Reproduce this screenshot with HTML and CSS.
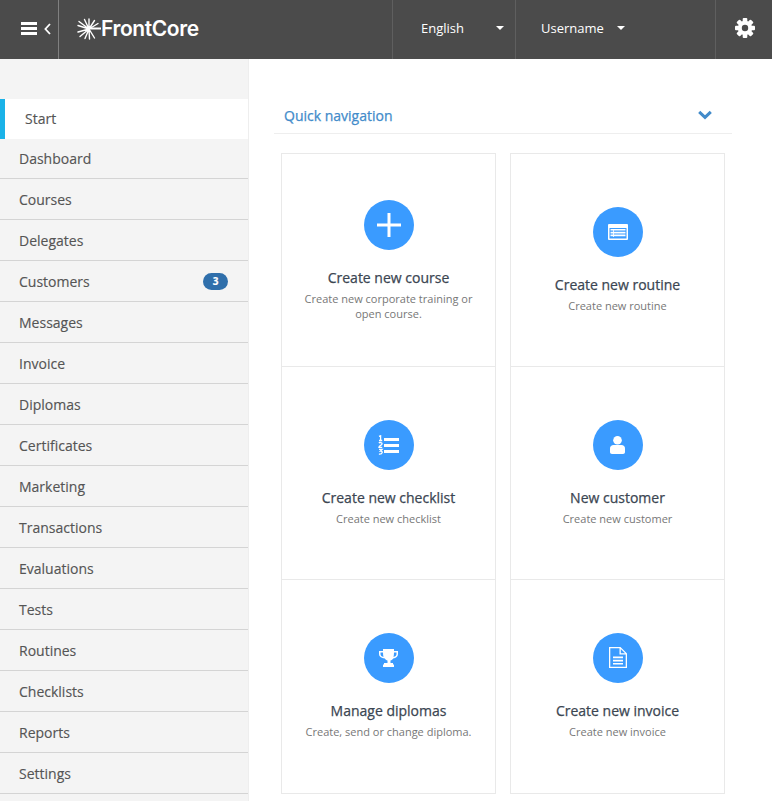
FILE: index.html
```html
<!DOCTYPE html>
<html lang="en">
<head>
    <meta charset="UTF-8">
    <meta name="viewport" content="width=device-width, initial-scale=1.0">
    <title>FrontCore - Start</title>
    <link rel="stylesheet" href="styles.css">
</head>
<body>
    <header class="topbar">
        <div class="toggle">
            <svg class="burger" width="16" height="13" viewBox="0 0 16 13"><path fill="#fff" d="M0 0h16v3H0zM0 5h16v3H0zM0 10h16v3H0z"/></svg>
            <svg class="back" width="7" height="12" viewBox="0 0 7 12"><path fill="none" stroke="#fff" stroke-width="1.800" d="M6 1 1.400 6 6 11"/></svg>
        </div>
        <a class="logo" href="#">
            <svg width="24" height="22" viewBox="0 0 24 22">
                <g fill="none" stroke="#fff" stroke-width="1.400" stroke-linecap="round">
                    <path d="M12 11 2 3.500M12 11 1 7.500M12 11 1 14M12 11 3 18.500M12 11 7.500 1.500M12 11 8 20.500M12 11 12.500 21M12 11 12 1M12 11 17.500 2.500M12 11 17.500 20M12 11 21 5.500"/>
                    <path d="M13 10.500h11" stroke-width="2"/>
                </g>
            </svg>
            <span>FrontCore</span>
        </a>
        <div class="menu menu-lang">
            <span>English</span>
            <i class="caret"></i>
        </div>
        <div class="menu menu-user">
            <span>Username</span>
            <i class="caret"></i>
        </div>
        <div class="settings">
            <svg width="20" height="20" viewBox="0 0 20 20">
                <g fill="#fff">
                    <rect x="7.700" y="0" width="4.600" height="20" rx="1"/>
                    <rect x="7.700" y="0" width="4.600" height="20" rx="1" transform="rotate(45 10 10)"/>
                    <rect x="7.700" y="0" width="4.600" height="20" rx="1" transform="rotate(90 10 10)"/>
                    <rect x="7.700" y="0" width="4.600" height="20" rx="1" transform="rotate(135 10 10)"/>
                </g>
                <circle cx="10" cy="10" r="5.200" fill="#4b4b4b" stroke="#fff" stroke-width="4"/>
            </svg>
        </div>
    </header>

    <div class="layout">
        <nav class="sidebar">
            <a class="nav-start" href="#">Start</a>
            <a class="nav-item" href="#">Dashboard</a>
            <a class="nav-item" href="#">Courses</a>
            <a class="nav-item" href="#">Delegates</a>
            <a class="nav-item" href="#">Customers <span class="badge">3</span></a>
            <a class="nav-item" href="#">Messages</a>
            <a class="nav-item" href="#">Invoice</a>
            <a class="nav-item" href="#">Diplomas</a>
            <a class="nav-item" href="#">Certificates</a>
            <a class="nav-item" href="#">Marketing</a>
            <a class="nav-item" href="#">Transactions</a>
            <a class="nav-item" href="#">Evaluations</a>
            <a class="nav-item" href="#">Tests</a>
            <a class="nav-item" href="#">Routines</a>
            <a class="nav-item" href="#">Checklists</a>
            <a class="nav-item" href="#">Reports</a>
            <a class="nav-item" href="#">Settings</a>
        </nav>

        <main class="content">
            <div class="quick-head">
                <h2>Quick navigation</h2>
                <svg width="14" height="10" viewBox="0 0 14 10"><path fill="none" stroke="#428bca" stroke-width="3" d="M1.200 1.800 7 7.400l5.800-5.600"/></svg>
            </div>

            <div class="cards">
                <a class="card" href="#">
                    <span class="circle">
                        <svg width="24" height="24" viewBox="0 0 24 24"><path fill="#fff" d="M10.500 0h3v10.500H24v3H13.500V24h-3V13.500H0v-3h10.500z"/></svg>
                    </span>
                    <h3>Create new course</h3>
                    <p>Create new corporate training or open course.</p>
                </a>
                <a class="card" href="#">
                    <span class="circle">
                        <svg width="20" height="16" viewBox="0 0 20 16"><path fill="#fff" fill-rule="evenodd" d="M1 0h18a1 1 0 0 1 1 1v14a1 1 0 0 1-1 1H1a1 1 0 0 1-1-1V1a1 1 0 0 1 1-1zm.5 4v10.500h17V4z"/><path fill="#fff" d="M2.500 5h15v1.600h-15zM2.500 7.800h15v1.600h-15zM2.500 10.600h15v1.600h-15zM5 5h.8v8H5z"/></svg>
                    </span>
                    <h3>Create new routine</h3>
                    <p>Create new routine</p>
                </a>
                <a class="card" href="#">
                    <span class="circle">
                        <svg width="21" height="20" viewBox="0 0 21 20">
                            <path fill="#fff" d="M6 3h15v3H6zM6 9h15v3H6zM6 15h15v3H6z"/>
                            <path fill="none" stroke="#fff" stroke-width="1.300" d="M1 1.400 2.600.8V5.500M1 5.500h3.200M.9 8.200c.6-1 3.200-1 3.200.6 0 1.300-3.200 2-3.200 3.600h3.300M1 14.300h3.100L2.400 16.200c2.600-.3 2.600 3.300-1.500 2.900"/>
                        </svg>
                    </span>
                    <h3>Create new checklist</h3>
                    <p>Create new checklist</p>
                </a>
                <a class="card" href="#">
                    <span class="circle">
                        <svg width="15" height="18" viewBox="0 0 15 18"><circle cx="7.500" cy="4.300" r="4.300" fill="#fff"/><path fill="#fff" d="M0 16v-3.500C0 10.500 1.500 9 3.500 9h8c2 0 3.500 1.500 3.500 3.500V16c0 1.200-.8 2-2 2H2c-1.200 0-2-.8-2-2z"/></svg>
                    </span>
                    <h3>New customer</h3>
                    <p>Create new customer</p>
                </a>
                <a class="card" href="#">
                    <span class="circle">
                        <svg width="19" height="18" viewBox="0 0 19 18"><path fill="#fff" d="M4 0h11v2h4v3c0 2.400-2 4.200-4.800 4.500-.7 1-1.500 1.600-2.700 2V14h2.500v1.600H15V18H4v-2.400h1V14h3.500v-2.500c-1.200-.4-2-1-2.700-2C2 9.200 0 7.400 0 5V2h4zM1.500 3.400V5c0 1.500 1.200 2.700 3 3C4.200 6.600 4 5 4 3.400zm16 0H15c0 1.600-.2 3.200-.5 4.600 1.800-.3 3-1.500 3-3z"/></svg>
                    </span>
                    <h3>Manage diplomas</h3>
                    <p>Create, send or change diploma.</p>
                </a>
                <a class="card" href="#">
                    <span class="circle">
                        <svg width="18" height="21" viewBox="0 0 18 21"><path fill="#fff" fill-rule="evenodd" d="M0 0h11.500L18 6.500V21H0zm1.300 1.300v18.400h15.400V7.500H10.500V1.300zm10.500.6v4.300h4.300z"/><path fill="#fff" d="M4 9.500h10v1.700H4zM4 12.700h10v1.700H4zM4 15.900h10v1.700H4z"/></svg>
                    </span>
                    <h3>Create new invoice</h3>
                    <p>Create new invoice</p>
                </a>
            </div>
        </main>
    </div>
</body>
</html>
```

FILE: styles.css
```css
* {
    box-sizing: border-box;
}
html, body {
    height: 100%;
}
body {
    margin: 0;
    overflow: hidden;
    font-family: "Open Sans", Arial, sans-serif;
    background: #fff;
    color: #555;
}
a {
    color: inherit;
    text-decoration: none;
}

/* top bar */
.topbar {
    display: flex;
    height: 59px;
    background: #4b4b4b;
    color: #fff;
    font-size: 13px;
}
.toggle {
    display: flex;
    align-items: center;
    gap: 7px;
    width: 59px;
    padding: 0 0 2px 21px;
    border-right: 1px solid #808080;
}
.logo {
    display: flex;
    align-items: center;
    width: 333px;
    padding: 0 0 2px 18px;
    font-family: Inter, Arial, sans-serif;
    font-size: 21px;
    font-weight: 600;
    letter-spacing: -0.4px;
}
.menu {
    display: flex;
    align-items: center;
    justify-content: space-between;
    padding-bottom: 3px;
    border-left: 1px solid #5f5f5f;
}
.menu-lang {
    width: 123px;
    padding-left: 28px;
    padding-right: 11px;
}
.menu-user {
    width: 200px;
    padding-left: 25px;
    padding-right: 90px;
}
.caret {
    width: 0;
    height: 0;
    border-left: 4px solid transparent;
    border-right: 4px solid transparent;
    border-top: 4px solid #fff;
}
.settings {
    display: flex;
    align-items: center;
    justify-content: center;
    flex: 1;
    padding: 0 0 3px 2px;
    border-left: 1px solid #5f5f5f;
}

/* page */
.layout {
    display: flex;
    height: calc(100% - 59px);
}
.sidebar {
    width: 249px;
    flex-shrink: 0;
    padding-top: 40px;
    background: #f4f4f4;
    border-right: 1px solid #eee;
    font-size: 14px;
    font-weight: 500;
    -webkit-text-stroke: 0.15px;
}
.nav-start {
    display: flex;
    align-items: center;
    height: 40px;
    padding: 0 0 1px 20px;
    background: #fff;
    border-left: 5px solid #1ab2e8;
}
.nav-item {
    display: flex;
    align-items: center;
    justify-content: space-between;
    height: 41px;
    padding: 0 20px 0 19px;
    border-bottom: 1px solid #d4d4d4;
}
.nav-start + .nav-item {
    height: 40px;
}
.badge {
    width: 25px;
    height: 17px;
    border-radius: 9px;
    background: #2f6fab;
    color: #fff;
    font-size: 10px;
    font-weight: 700;
    line-height: 17px;
    text-align: center;
}

/* quick navigation */
.content {
    flex: 1;
    padding: 40px 40px 0 25px;
}
.quick-head {
    display: flex;
    align-items: center;
    justify-content: space-between;
    height: 35px;
    padding: 0 20px 2px 10px;
    border-bottom: 1px solid #eee;
}
.quick-head h2 {
    margin: 0;
    color: #428bca;
    font-size: 14px;
    font-weight: 500;
    -webkit-text-stroke: 0.25px;
}
.cards {
    display: grid;
    grid-template-columns: 215px 215px;
    grid-auto-rows: 213px;
    column-gap: 14px;
    margin: 19px 0 0 7px;
}
.card {
    display: flex;
    flex-direction: column;
    align-items: center;
    justify-content: center;
    padding: 0 20px;
    border: 1px solid #e9e9e9;
    border-bottom: 0;
    text-align: center;
}
.card:nth-child(n+5) {
    height: 215px;
    padding-bottom: 2px;
    border-bottom: 1px solid #e9e9e9;
}
.circle {
    display: flex;
    align-items: center;
    justify-content: center;
    width: 50px;
    height: 50px;
    border-radius: 50%;
    background: #3a9bff;
}
.card h3 {
    margin: 18px 0 3px;
    color: #3b4652;
    font-size: 14px;
    font-weight: 500;
    line-height: 20px;
    -webkit-text-stroke: 0.25px;
}
.card p {
    margin: 0;
    color: #777;
    font-size: 11px;
    line-height: 15px;
}
```
